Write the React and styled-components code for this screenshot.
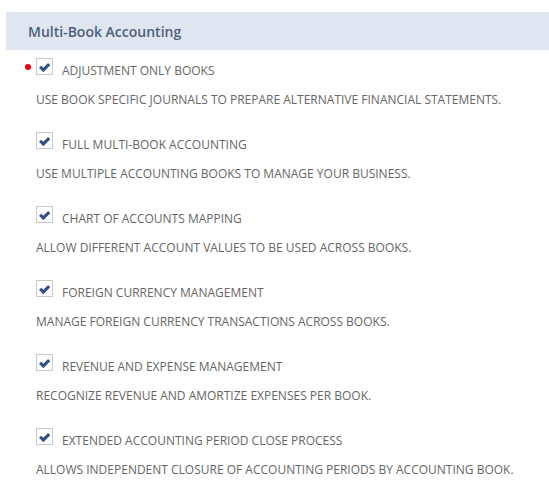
import React from "react";
import styled, { createGlobalStyle } from "styled-components";

const Global = createGlobalStyle`
  html, body { margin: 0; padding: 0; background: #fff; }
  body { font-family: "Open Sans", "Liberation Sans", sans-serif; }
`;

const Page = styled.div`
  padding: 12px 0 0 6px;
`;

const Header = styled.div`
  height: 38px;
  background: #dfe6ef;
  display: flex;
  align-items: center;
  padding-left: 22px;
  font-size: 14px;
  font-weight: 600;
  color: #4d5f7c;
`;

const List = styled.div`
  padding: 8px 0 0 30px;
  display: flex;
  flex-direction: column;
`;

const Item = styled.div`
  height: 74px;
  display: flex;
  flex-direction: column;
`;

const CheckLine = styled.div`
  position: relative;
  height: 17px;
  display: flex;
  align-items: flex-end;
  gap: 9px;
`;

const Box = styled.span`
  box-sizing: border-box;
  width: 17px;
  height: 17px;
  border: 1px solid #c9c9c9;
  background: #fff;
  display: flex;
  justify-content: center;
  padding: 4px 0 0 1px;
`;

const Dot = styled.span`
  position: absolute;
  left: -11px;
  top: 6px;
  width: 6px;
  height: 6px;
  border-radius: 50%;
  background: #e8000b;
`;

const Label = styled.span`
  font-size: 12px;
  color: #666;
  line-height: 16px;
  margin-bottom: -4px;
`;

const Desc = styled.div`
  margin-top: 16px;
  font-size: 12px;
  line-height: 18px;
  color: #666;
`;

const Check = () => (
  <svg width="12" height="10" viewBox="0 0 12 10">
    <path d="M0 4.8 L2.2 2.7 L4.3 4.8 L9.1 0 L11.3 2.2 L4.3 9.2 Z" fill="#2d5288" />
  </svg>
);

const items = [
  ["ADJUSTMENT ONLY BOOKS", "USE BOOK SPECIFIC JOURNALS TO PREPARE ALTERNATIVE FINANCIAL STATEMENTS.", true],
  ["FULL MULTI-BOOK ACCOUNTING", "USE MULTIPLE ACCOUNTING BOOKS TO MANAGE YOUR BUSINESS."],
  ["CHART OF ACCOUNTS MAPPING", "ALLOW DIFFERENT ACCOUNT VALUES TO BE USED ACROSS BOOKS."],
  ["FOREIGN CURRENCY MANAGEMENT", "MANAGE FOREIGN CURRENCY TRANSACTIONS ACROSS BOOKS."],
  ["REVENUE AND EXPENSE MANAGEMENT", "RECOGNIZE REVENUE AND AMORTIZE EXPENSES PER BOOK."],
  ["EXTENDED ACCOUNTING PERIOD CLOSE PROCESS", "ALLOWS INDEPENDENT CLOSURE OF ACCOUNTING PERIODS BY ACCOUNTING BOOK."],
];

export default function App() {
  return (
    <Page>
      <Global />
      <Header>Multi-Book Accounting</Header>
      <List>
        {items.map(([label, desc, req]) => (
          <Item key={label}>
            <CheckLine>
              {req && <Dot />}
              <Box><Check /></Box>
              <Label>{label}</Label>
            </CheckLine>
            <Desc>{desc}</Desc>
          </Item>
        ))}
      </List>
    </Page>
  );
}
